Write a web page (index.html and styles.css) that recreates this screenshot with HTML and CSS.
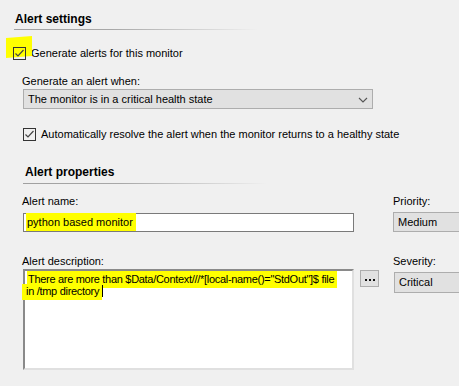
FILE: index.html
```html
<!DOCTYPE html>
<html>
<head>
<meta charset="utf-8">
<link rel="stylesheet" href="styles.css">
</head>
<body>
<div class="page">
  <div class="heading h1">Alert settings</div>
  <div class="rule r1"></div>

  <div class="check-row c1">
    <span class="hl-box"></span>
    <span class="box"><svg width="11" height="11" viewBox="0 0 11 11"><path d="M1.5 5.5 L4 8 L9.5 2" fill="none" stroke="#444" stroke-width="1.2"/></svg></span>
    <span class="check-text">Generate alerts for this monitor</span>
  </div>

  <div class="indent">
    <div class="label l-when">Generate an alert when:</div>
    <div class="select wide">
      <span>The monitor is in a critical health state</span>
      <svg class="chev" width="10" height="6" viewBox="0 0 10 6"><path d="M1 1 L5 5 L9 1" fill="none" stroke="#555" stroke-width="1.1"/></svg>
    </div>
    <div class="check-row c2">
      <span class="box"><svg width="11" height="11" viewBox="0 0 11 11"><path d="M1.5 5.5 L4 8 L9.5 2" fill="none" stroke="#444" stroke-width="1.2"/></svg></span>
      <span class="check-text">Automatically resolve the alert when the monitor returns to a healthy state</span>
    </div>
  </div>

  <div class="props">
    <div class="heading h2">Alert properties</div>
    <div class="rule r2"></div>

    <div class="row row1">
      <div class="left">
        <div class="label">Alert name:</div>
        <div class="input"><span class="hl name-hl">python based monitor</span></div>
      </div>
      <div class="right">
        <div class="label">Priority:</div>
        <div class="select side">Medium</div>
      </div>
    </div>

    <div class="row row2">
      <div class="left">
        <div class="label">Alert description:</div>
        <div class="textarea">
          <span class="hl d1">There are more than $Data/Context///*[local-name()="StdOut"]$ file</span><br><span class="hl d2">in /tmp directory</span><span class="caret"></span>
        </div>
      </div>
      <div class="dots"><i></i><i></i><i></i></div>
      <div class="right">
        <div class="label">Severity:</div>
        <div class="select side sev">Critical</div>
      </div>
    </div>
  </div>
</div>
</body>
</html>
```

FILE: styles.css
```css
html, body {
  margin: 0;
  padding: 0;
  background: #f0f0f0;
}
body {
  width: 459px;
  height: 386px;
  overflow: hidden;
  font-family: "Liberation Sans", Arial, sans-serif;
  font-size: 11px;
  color: #000;
}
.page {
  padding: 12px 0 0 0;
}
.heading {
  font-weight: bold;
  font-size: 12px;
  line-height: 15px;
}
.h1 { margin-left: 15px; }
.rule {
  height: 1px;
  width: 244px;
  background: linear-gradient(to right, #a0a0a0, #a8a8a8 40%, #f0f0f0);
}
.r1 { margin: 2px 0 0 14px; }

.check-row {
  position: relative;
  display: flex;
  align-items: center;
  height: 14px;
}
.c1 { margin: 16px 0 0 13px; }
.hl-box {
  position: absolute;
  left: -7px;
  top: -9px;
  width: 26px;
  height: 20px;
  background: #ffff00;
  transform: skewY(-4deg);
}
.box {
  position: relative;
  width: 11px;
  height: 11px;
  border: 1px solid #333;
  display: flex;
  align-items: center;
  justify-content: center;
}
.c1 .check-text { margin-left: 5px; }
.c2 .check-text { margin-left: 5px; }
.check-text { line-height: 14px; white-space: nowrap; }

.indent { margin-left: 22px; }
.label { line-height: 14px; white-space: nowrap; }
.l-when { margin-top: 14px; }
.select {
  box-sizing: border-box;
  border: 1px solid #adadad;
  background: #e1e1e1;
  height: 20px;
  line-height: 18px;
  padding-left: 4px;
  position: relative;
}
.wide {
  margin: 1px 0 0 1px;
  width: 350px;
}
.chev {
  position: absolute;
  right: 4px;
  top: 7px;
}
.c2 { margin: 18px 0 0 1px; }

.props { margin: 0 0 0 23px; }
.h2 { margin: 24px 0 0 2px; }
.r2 { margin: 3px 0 0 0; }

.row { display: flex; align-items: flex-start; }
.row > * { flex-shrink: 0; }
.row1 { margin-top: 10px; }
.row2 { margin-top: 22px; }
.left { width: 331px; }
.left .label { margin-left: -1px; }
.right { margin-left: 39px; width: 80px; }
.row2 .right { margin-left: 14px; }
.input {
  box-sizing: border-box;
  height: 19px;
  margin-top: 5px;
  background: #fff;
  border: 1px solid #7a7a7a;
  line-height: 17px;
  padding-left: 2px;
}
.side {
  margin-top: 4px;
  width: 80px;
  border-right: none;
}
.sev { margin-top: 4px; height: 21px; line-height: 19px; margin-left: 1px; }
.hl {
  background: #ffff00;
}
.name-hl { padding: 3px 3px 3px 1px; }
.textarea {
  box-sizing: border-box;
  height: 101px;
  margin-top: 1px;
  background: #fff;
  border: 2px solid #fff;
  border-color: #8a8a8a #e0e0e0 #e0e0e0 #8a8a8a;
  padding: 2px 0 0 2px;
  line-height: 12px;
  letter-spacing: -0.3px;
  white-space: nowrap;
}
.d1 { padding: 2px 3px 3px 1px; }
.d2 { padding: 1px 3px 3px 4px; margin-left: -5px; }
.caret {
  display: inline-block;
  width: 1px;
  height: 12px;
  background: #000;
  vertical-align: -2px;
}
.dots {
  box-sizing: border-box;
  margin: 16px 0 0 6px;
  width: 19px;
  height: 17px;
  border: 1px solid #adadad;
  background: #e1e1e1;
  display: flex;
  justify-content: center;
  align-items: flex-end;
  gap: 2px;
  padding-bottom: 5px;
}
.dots i {
  display: block;
  width: 2px;
  height: 2px;
  background: #111;
}
```
